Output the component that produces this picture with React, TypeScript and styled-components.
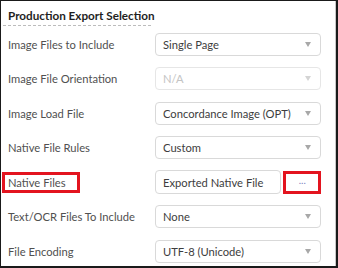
import { Fragment } from 'react';
import styled, { createGlobalStyle } from 'styled-components';

const GlobalStyle = createGlobalStyle`
  html, body {
    margin: 0;
    padding: 0;
    background: #111;
  }
  body {
    font-family: Lato, "Noto Sans", sans-serif;
  }
`;

const Frame = styled.div`
  width: 338px;
  height: 268px;
  box-sizing: border-box;
  border-top: 1px solid #1a1a1a;
  border-left: 1px solid #1a1a1a;
  border-right: 2px solid #1a1a1a;
  border-bottom: 2px solid #1a1a1a;
  background: #fff;
  overflow: hidden;
`;

const Panel = styled.section`
  height: 100%;
  box-sizing: border-box;
  border-right: 1px solid #c8c8c8;
  padding: 0 0 0 7px;
`;

const Title = styled.h2`
  margin: 0;
  padding-top: 6px;
  height: 18px;
  font-size: 11.7px;
  font-weight: 700;
  color: #1f1f1f;
  line-height: 16px;
`;

const Dashed = styled.div`
  margin-left: -5px;
  width: 148px;
  border-top: 1px dashed #bcbcbc;
`;

const Form = styled.div`
  display: grid;
  grid-template-columns: 147px 166px;
  grid-auto-rows: 24px;
  row-gap: 10.5px;
  padding-top: 6px;
  align-items: center;
`;

const Label = styled.span<{ $highlight?: boolean }>`
  font-size: 11.2px;
  color: #505050;
  white-space: nowrap;
  ${(p) =>
    p.$highlight &&
    `
    display: inline-block;
    margin-left: -6px;
    width: 78px;
    height: 21px;
    box-sizing: border-box;
    border: 3px solid #e3141f;
    padding-left: 3px;
    line-height: 15px;
  `}
`;

const Select = styled.div<{ $disabled?: boolean }>`
  display: flex;
  align-items: center;
  justify-content: space-between;
  height: 23px;
  box-sizing: border-box;
  border: 1px solid ${(p) => (p.$disabled ? '#e6e6e6' : '#d9d9d9')};
  border-radius: 4px;
  padding: 0 9px 0 7px;
  font-size: 11.2px;
  color: ${(p) => (p.$disabled ? '#c4c4c4' : '#3d3d3d')};
  white-space: nowrap;
`;

const Caret = styled.span<{ $disabled?: boolean }>`
  width: 0;
  height: 0;
  border-left: 3px solid transparent;
  border-right: 3px solid transparent;
  border-top: 5px solid ${(p) => (p.$disabled ? '#d4d4d4' : '#a8a8a8')};
`;

const FileRow = styled.div`
  display: flex;
  align-items: center;
  gap: 2px;
`;

const TextInput = styled.div`
  width: 128px;
  height: 24px;
  box-sizing: border-box;
  border: 1px solid #d9d9d9;
  border-radius: 4px;
  padding: 0 7px;
  display: flex;
  align-items: center;
  font-size: 11.2px;
  color: #3d3d3d;
  white-space: nowrap;
`;

const BrowseButton = styled.button`
  width: 38px;
  height: 23px;
  box-sizing: border-box;
  border: 3px solid #e3141f;
  background: #fff;
  padding: 0 0 5px;
  font-family: inherit;
  font-size: 10px;
  color: #7a7fbf;
  display: flex;
  align-items: center;
  justify-content: center;
`;

const rows: { label: string; value: string; disabled?: boolean }[] = [
  { label: 'Image Files to Include', value: 'Single Page' },
  { label: 'Image File Orientation', value: 'N/A', disabled: true },
  { label: 'Image Load File', value: 'Concordance Image (OPT)' },
  { label: 'Native File Rules', value: 'Custom' },
];

const rowsAfter = [
  { label: 'Text/OCR Files To Include', value: 'None' },
  { label: 'File Encoding', value: 'UTF-8 (Unicode)' },
];

export default function App() {
  return (
    <>
      <GlobalStyle />
      <Frame>
        <Panel>
          <Title>Production Export Selection</Title>
          <Dashed />
          <Form>
            {rows.map((r) => (
              <Fragment key={r.label}>
                <Label>{r.label}</Label>
                <Select $disabled={r.disabled}>
                  {r.value}
                  <Caret $disabled={r.disabled} />
                </Select>
              </Fragment>
            ))}
            <div>
              <Label $highlight>Native Files</Label>
            </div>
            <FileRow>
              <TextInput>Exported Native File</TextInput>
              <BrowseButton>...</BrowseButton>
            </FileRow>
            {rowsAfter.map((r) => (
              <Fragment key={r.label}>
                <Label>{r.label}</Label>
                <Select>
                  {r.value}
                  <Caret />
                </Select>
              </Fragment>
            ))}
          </Form>
        </Panel>
      </Frame>
    </>
  );
}
